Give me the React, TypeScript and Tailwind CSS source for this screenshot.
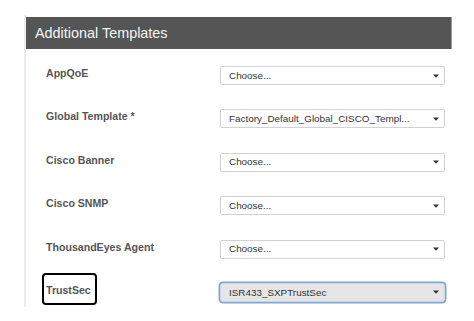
import React from "react";

const rows: { label: string; value: string; focused?: boolean; boxed?: boolean }[] = [
  { label: "AppQoE", value: "Choose..." },
  { label: "Global Template *", value: "Factory_Default_Global_CISCO_Templ..." },
  { label: "Cisco Banner", value: "Choose..." },
  { label: "Cisco SNMP", value: "Choose..." },
  { label: "ThousandEyes Agent", value: "Choose..." },
  { label: "TrustSec", value: "ISR433_SXPTrustSec", focused: true, boxed: true },
];

function Caret() {
  return (
    <svg width="6" height="4" viewBox="0 0 6 4" className="shrink-0">
      <path d="M0 0.5 L6 0.5 L3 3.8 Z" fill="#333" />
    </svg>
  );
}

export default function App() {
  return (
    <div
      className="w-[474px] h-[321px] bg-white overflow-hidden"
      style={{ fontFamily: '"Liberation Sans", Arial, sans-serif' }}
    >
      <div className="ml-[24px] mt-[15px] w-[428px] border-l-2 border-[#ececec] pt-[2px] pb-[4px]">
        <div className="h-[32px] bg-[#555555] flex items-center pl-[9px] border-r border-[#9a9a9a]">
          <span className="text-[14.4px] text-[#f4f4f4] leading-none">Additional Templates</span>
        </div>
        <div className="pt-[17px]">
          {rows.map((r) => (
            <div key={r.label} className="h-[43.4px] last:h-[20px] flex items-start">
              <div className="w-[194px] pl-[20px] relative">
                <span className="block text-[10.6px] leading-[13px] font-bold text-[#555555] pt-[1px]">
                  {r.label}
                </span>
                {r.boxed && (
                  <div className="absolute left-[16px] top-[-10px] w-[55px] h-[32px] border-2 border-black rounded-[4px]" />
                )}
              </div>
              <div
                className={
                  r.focused
                    ? "w-[225px] h-[19px] flex items-center justify-between pl-[8px] pr-[5px] bg-[#e6e6e6] border border-[#c9d6e6] rounded-[3px] shadow-[0_0_0_1.5px_#7fa6d6]"
                    : "w-[225px] h-[19px] flex items-center justify-between pl-[8px] pr-[5px] bg-white border border-[#d2d2d2] rounded-[2px]"
                }
              >
                <span className="text-[9.9px] text-[#333333] leading-none whitespace-nowrap">{r.value}</span>
                <Caret />
              </div>
            </div>
          ))}
        </div>
      </div>
    </div>
  );
}
